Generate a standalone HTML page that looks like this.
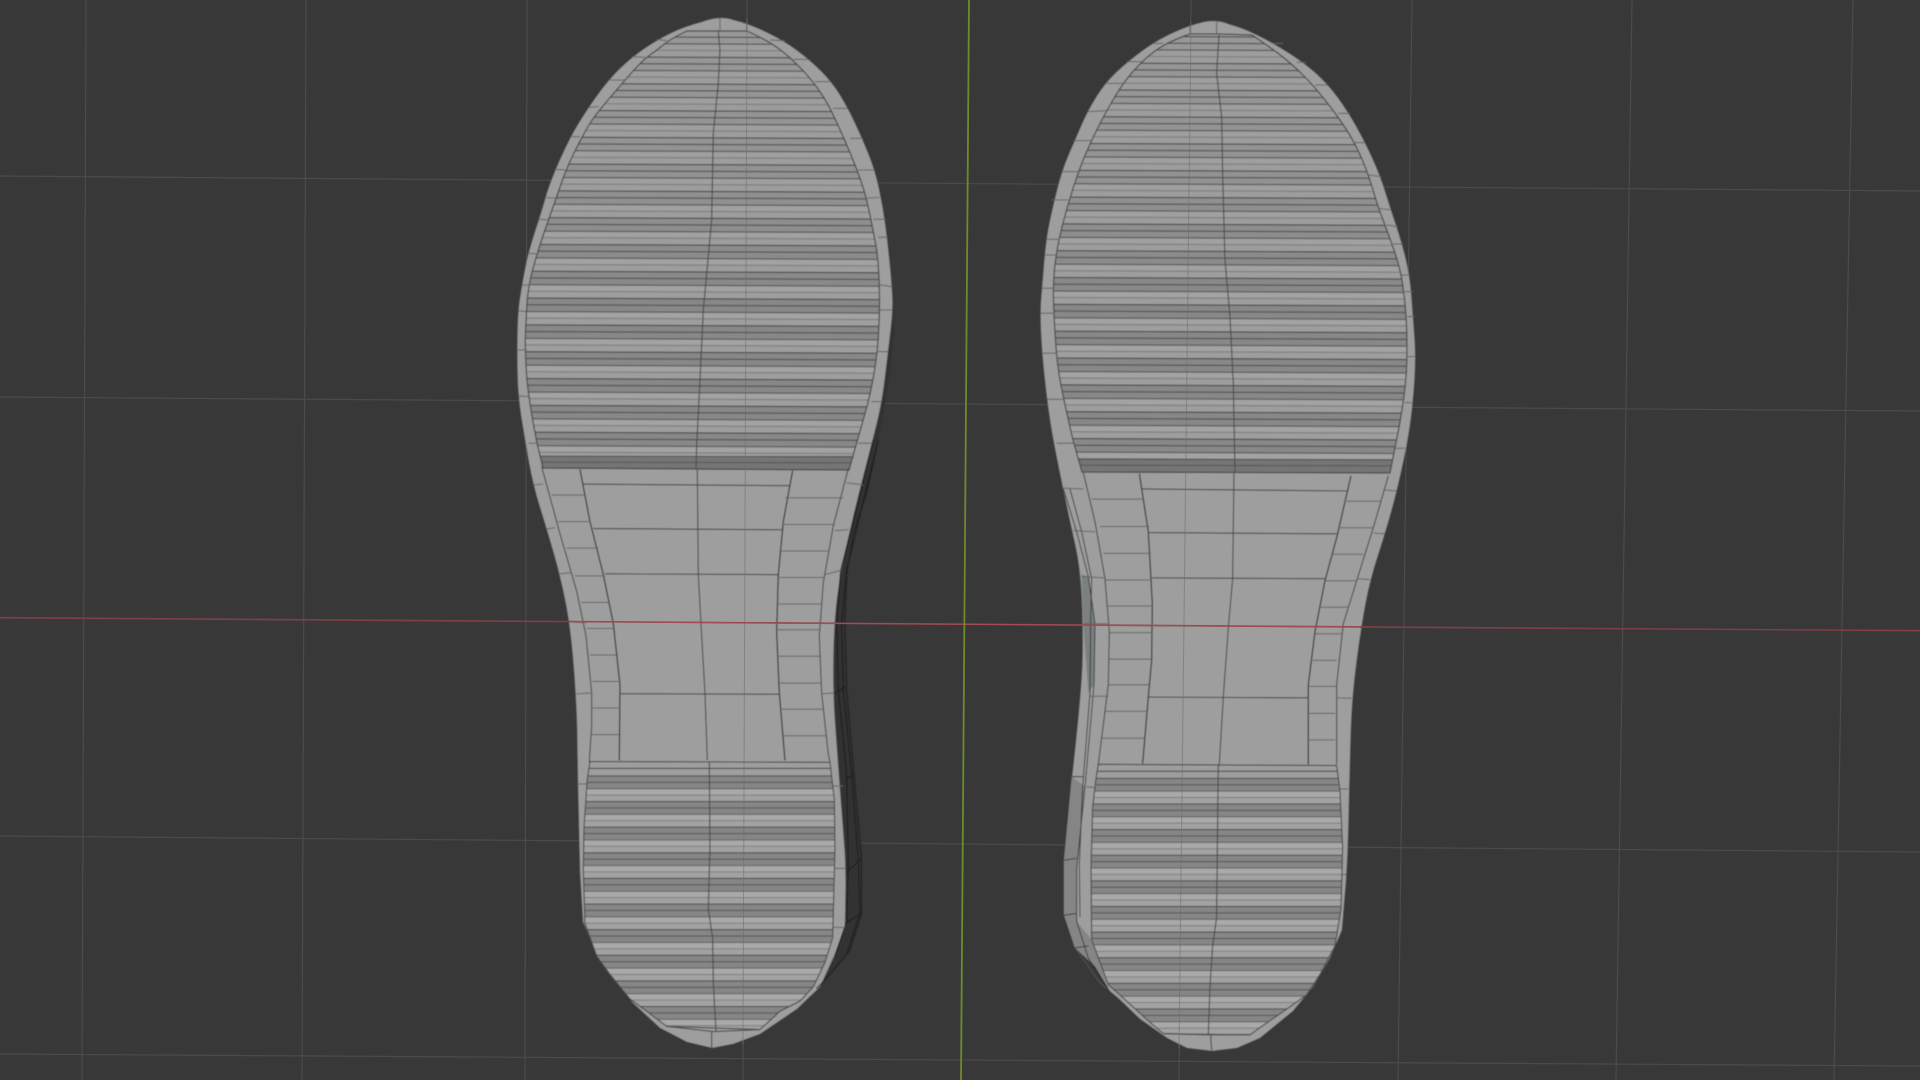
<!DOCTYPE html>
<html><head><meta charset="utf-8"><title>Viewport</title>
<style>
html,body{margin:0;padding:0;background:#383838;width:1920px;height:1080px;overflow:hidden}
svg{display:block}
path,line,polyline{vector-effect:non-scaling-stroke;fill:none}
.e{stroke:#4a4a4a;stroke-width:1.1}
.k{stroke:#3c3c3c;stroke-width:1.3}
.t{stroke:#636363;stroke-width:1}
.d{stroke:#1d1d1d;stroke-width:1}
</style></head><body>
<svg width="1920" height="1080" viewBox="0 0 1920 1080" xmlns="http://www.w3.org/2000/svg">
<defs>
<filter id="b" x="-5%" y="-5%" width="110%" height="110%"><feGaussianBlur stdDeviation="0.45"/></filter>
<path id="iL" d="M717,31 L747,31 Q767,40 778.5,48.5 Q790,57 801,68.5 Q812,80 819.5,91 Q827,102 832.5,113.5 Q838,125 844,138.5 Q850,152 856,167.5 Q862,183 865,194 Q868,205 871,220 Q874,235 876,246 Q878,257 879,278.5 Q880,300 879,325 Q878,350 874,373.5 Q870,397 864,417 L849,470 L543,468 L537,443 Q528,397 526.5,373.5 Q525,350 525.5,335 Q526,320 527,303.5 Q528,287 533,268.5 Q538,250 545.5,228.5 Q553,207 556.5,197 Q560,187 564,176 Q568,165 575,151 Q582,137 587.5,127.5 Q593,118 600.5,109 Q608,100 616.5,90 Q625,80 634,70 Q643,60 650,55 Q657,50 664.5,44 Q672,38 687,31 Z"/>
<path id="iR" d="M1220,34 L1252,35 Q1270,47 1281.5,56 Q1293,65 1303,75 Q1313,85 1325,100 Q1337,115 1346,129 Q1355,143 1361.5,158 Q1368,173 1373,190 Q1378,207 1383,220 Q1388,233 1394,250 Q1400,267 1402.5,283.5 Q1405,300 1406,316.5 Q1407,333 1407,348 Q1407,363 1406,376.5 Q1405,390 1402.5,406.5 Q1400,423 1397.5,435 L1390,473 L1082,472 L1073,440 Q1063,397 1060,380 Q1057,363 1055.5,340 Q1054,317 1053.5,300 Q1053,283 1055,265 Q1057,247 1062,227 Q1067,207 1073.5,187 Q1080,167 1086.5,152 Q1093,137 1100,123.5 Q1107,110 1115,96.5 Q1123,83 1133,71.5 Q1143,60 1155,51 Q1167,42 1190,34 Z"/>
<clipPath id="cL"><use href="#iL"/></clipPath>
<clipPath id="cR"><use href="#iR"/></clipPath>
<pattern id="fL" patternUnits="userSpaceOnUse" width="600" height="26.83" patternTransform="translate(0,429.3) rotate(0.25)">
<rect width="600" height="26.83" fill="#9e9e9e"/><rect width="600" height="13.4" fill="#888888"/><rect y="13.4" width="600" height="6.7" fill="#a3a3a3"/>
</pattern>
<pattern id="fR" patternUnits="userSpaceOnUse" width="600" height="26.83" patternTransform="translate(0,433.3) rotate(0.25)">
<rect width="600" height="26.83" fill="#9e9e9e"/><rect width="600" height="13.4" fill="#888888"/><rect y="13.4" width="600" height="6.7" fill="#a3a3a3"/>
</pattern>
<pattern id="lL" patternUnits="userSpaceOnUse" width="600" height="26.83" patternTransform="translate(0,429.3) rotate(0.25)">
<rect width="600" height="1.2" fill="#4d4d4d"/><rect y="6.7" width="600" height="1.2" fill="#525252"/><rect y="13.4" width="600" height="1.2" fill="#555"/><rect y="20.1" width="600" height="1" fill="#787878"/>
</pattern>
<pattern id="lR" patternUnits="userSpaceOnUse" width="600" height="26.83" patternTransform="translate(0,433.3) rotate(0.25)">
<rect width="600" height="1.2" fill="#4d4d4d"/><rect y="6.7" width="600" height="1.2" fill="#525252"/><rect y="13.4" width="600" height="1.2" fill="#555"/><rect y="20.1" width="600" height="1" fill="#787878"/>
</pattern>
<pattern id="hL" patternUnits="userSpaceOnUse" width="1300" height="62.8" patternTransform="translate(0,822)">
<rect width="1300" height="62.8" fill="#a2a2a2"/><rect width="1300" height="31.4" fill="#868686"/><rect y="31.4" width="1300" height="15.7" fill="#a9a9a9"/>
<rect width="1300" height="2.7" fill="#4e4e4e"/><rect y="15.7" width="1300" height="2.7" fill="#575757"/><rect y="31.4" width="1300" height="2.5" fill="#606060"/><rect y="47.1" width="1300" height="2.2" fill="#7a7a7a"/>
</pattern>
<pattern id="hR" patternUnits="userSpaceOnUse" width="1300" height="62.8" patternTransform="translate(0,828)">
<rect width="1300" height="62.8" fill="#a2a2a2"/><rect width="1300" height="31.4" fill="#868686"/><rect y="31.4" width="1300" height="15.7" fill="#a9a9a9"/>
<rect width="1300" height="2.7" fill="#4e4e4e"/><rect y="15.7" width="1300" height="2.7" fill="#575757"/><rect y="31.4" width="1300" height="2.5" fill="#606060"/><rect y="47.1" width="1300" height="2.2" fill="#7a7a7a"/>
</pattern>
<linearGradient id="fade" gradientUnits="userSpaceOnUse" x1="0" y1="30" x2="0" y2="300">
<stop offset="0" stop-color="#9c9c9c" stop-opacity=".8"/><stop offset=".55" stop-color="#9c9c9c" stop-opacity=".5"/><stop offset="1" stop-color="#9c9c9c" stop-opacity="0"/>
</linearGradient>
</defs>

<rect width="1920" height="1080" fill="#383838"/>
<!-- grid -->
<g stroke="#4b4b4b" stroke-width="1.2">
<line x1="86" y1="0" x2="82" y2="1080"/><line x1="306" y1="0" x2="302" y2="1080"/><line x1="527" y1="0" x2="525" y2="1080"/><line x1="747" y1="0" x2="743" y2="1080"/>
<line x1="1191" y1="0" x2="1179" y2="1080"/><line x1="1412" y1="0" x2="1398" y2="1080"/><line x1="1632" y1="0" x2="1616" y2="1080"/><line x1="1853" y1="0" x2="1834" y2="1080"/>
<line x1="0" y1="176" x2="1920" y2="191"/><line x1="0" y1="397" x2="1920" y2="411"/><line x1="0" y1="836" x2="1920" y2="852"/><line x1="0" y1="1054" x2="1920" y2="1066"/>
</g>

<g filter="url(#b)">
<!-- LEFT SHOE -->
<polygon fill="#323031" points="892,300 894,330 890,370 884,410 878,440 867,493 853,534 847,575 845,624 847,689 853,766 862,860 862,913 850,950 833,971 817,989 800,960 820,600 870,300"/>
<path style="fill:#9e9e9e" stroke="#666" stroke-width=".6" d="M733.5,20 Q747,23 765,31.5 Q783,40 796.5,50 Q810,60 821,71 Q832,82 840,95 Q848,108 855,123 Q862,138 868.5,154 Q875,170 879,188.5 Q883,207 885.5,226 Q888,245 890,266 Q892,287 892.5,298 Q893,310 890.5,331 Q888,352 885,377 Q882,402 877,422.5 Q872,443 867,462 Q862,481 856,505.5 Q850,530 845,552.5 Q840,575 837,599.5 Q834,624 833.5,658 Q833,693 835,721 Q837,750 840,789 Q843,828 844.5,848 Q846,868 845.5,897 L845,926 L835,954 L820,987 L797,1009 L760,1034 L733,1044 L712,1048 L687,1042 L660,1028 L633,1003 L610,975 L597,954 L583,922 L580,873 L578,787 L577,726 Q576,693 573,658.5 Q570,624 565,599.5 Q560,575 553.5,552.5 Q547,530 540,507.5 Q533,485 529,462.5 Q525,440 521.5,418.5 Q518,397 517.5,373.5 Q517,350 517.5,330 Q518,310 520,297.5 Q522,285 525,269 Q528,253 535,231.5 Q542,210 546,196 Q550,182 560,159.5 Q570,137 580,121 Q590,105 600,91.5 Q610,78 621,67.5 Q632,57 644.5,48.5 Q657,40 670,33.5 Q683,27 701.5,22 Q720,15 733.5,20 Z"/>
<g transform="matrix(.3333,0,0,.408,500,440)">
<path class="d" d="M1135 0L1075 200L1040 320L1025 450L1030 610L1055 820L1075 1030L1080 1160L1040 1260L1000 1300M1120 0L1060 200L1022 320L1010 450L1015 610L1040 820L1045 1040L1040 1180L1005 1265M1005 620L1040 605M1035 830L1060 822M1040 1060L1085 1025M1035 1185L1085 1160"/>
<path d="M1135 0L1100 130L1060 230L1040 330L1035 450L1040 610L1060 800L1085 1030L1085 1160L1050 1250L1000 1300L950 1345" stroke="#202020" stroke-width="1"/>
</g>
<!-- forefoot -->
<g clip-path="url(#cL)">
<rect x="500" y="20" width="420" height="460" fill="url(#fL)"/>
<rect x="500" y="20" width="420" height="280" fill="url(#fade)"/>
<rect x="500" y="20" width="420" height="460" fill="url(#lL)"/>
<rect x="500" y="456" width="420" height="14" fill="#757575"/>
<line x1="500" y1="456" x2="920" y2="457" stroke="#505050"/>
<line x1="500" y1="462" x2="920" y2="463" stroke="#555"/>
</g>
<use href="#iL" fill="none" stroke="#484848" stroke-width="1.2"/>
<g transform="matrix(.3333,0,0,.3333,500,0)">
<path class="e" d="M655 95L660 150L655 250L640 400L635 660L610 930L600 1140L590 1340L588 1405"/>
<path class="t" d="M80 1050L50 1050M78 935L55 932M88 855L65 855M115 762L85 760M150 660L115 658M175 595L140 593M200 510L165 508M240 410L210 410M295 320L265 322M375 240L325 240M435 172L395 170M500 122L470 118M660 52L660 92M740 65L740 92M810 120L855 122M880 178L925 178M945 245L990 245M1000 325L1045 325M1050 415L1090 415M1075 510L1125 510M1100 595L1140 592M1120 658L1158 658M1135 712L1165 712M1140 855L1178 860M1140 930L1178 930M1130 1055L1165 1055M1115 1205L1145 1205M1075 1330L1115 1330M110 1330L85 1330M85 1190L55 1188"/>
</g>
<!-- midfoot + heel -->
<g transform="matrix(.3333,0,0,.408,500,440)">
<path class="e" d="M125 65L180 230L230 370L258 480L275 620L275 700L268 790M1045 70L1000 210L970 350L958 480L965 620L985 770L990 790"/>
<path class="k" d="M240 72L270 200L310 330L340 450L360 600L358 785M878 75L850 200L835 330L830 470L838 620L855 785"/>
<path class="e" d="M592 72L595 330L603 450L615 620L622 785"/>
<path class="e" d="M248 108L870 112M280 217L850 220M315 328L835 330M362 622L838 623"/>
<path class="t" d="M155 135L255 135M175 200L270 200M200 265L295 265M225 333L315 333M245 398L330 398M260 462L340 462M270 527L355 527M277 592L360 592M278 657L360 657M275 722L358 722M855 142L1030 142M848 207L1005 207M838 272L985 272M832 337L970 337M830 402L965 402M830 465L960 465M833 530L960 530M838 596L965 596M845 660L970 660M850 725L980 725M130 108L100 110M165 215L140 218M215 325L180 328M258 448L205 445M275 620L230 622M265 843L235 843M1090 110L1040 105M1045 220L1005 222M1020 320L975 330M1002 620L965 622M1000 848L1030 848M1000 1050L1035 1050M1000 1195L1035 1195"/>
<polygon fill="url(#hL)" points="270,788 990,790 1003,880 1005,1000 1002,1100 998,1220 975,1280 940,1340 900,1375 840,1400 780,1445 500,1437 440,1400 390,1370 330,1310 290,1265 255,1185 250,1050 252,950 262,830"/>
<polygon fill="#9e9e9e" points="270,788 990,790 993,821 262,821"/>
<path class="e" d="M266 805L992 805"/>
<path class="e" d="M270 788L990 790L1003 880L1005 1000L1002 1100L998 1220L975 1280L940 1340L900 1375L840 1400L780 1445L500 1437L440 1400L390 1370L330 1310L290 1265L255 1185L250 1050L252 950L262 830Z"/>
<path class="e" d="M628 788L630 1000L625 1150L638 1220L640 1330L648 1450M635 1450L635 1490M500 1437L640 1450L780 1445"/>
</g>

<!-- RIGHT SHOE -->
<path style="fill:#9e9e9e" stroke="#666" stroke-width=".6" d="M1230,24.5 Q1243,28 1258,35.5 Q1273,43 1288,52.5 Q1303,62 1315,72.5 Q1327,83 1337,96.5 Q1347,110 1356,126 Q1365,142 1372.5,158.5 Q1380,175 1385,191 Q1390,207 1396,225 Q1402,243 1406,260 Q1410,277 1411.5,297 Q1413,317 1414.5,337 Q1416,357 1414.5,380 Q1413,403 1410.5,421.5 Q1408,440 1402.5,465.5 Q1397,491 1391,512.5 Q1385,534 1377.5,557 Q1370,580 1365.5,604 Q1361,628 1356.5,662.5 Q1352,697 1351,727.5 Q1350,758 1349,803 Q1348,848 1347,864.5 L1346,881 L1342,930 L1330,958 L1313,987 L1293,1011 L1260,1038 L1237,1048 L1212,1051 L1187,1048 L1167,1038 L1140,1019 L1117,997 L1100,983 L1075,948 L1064,915 L1064,860 L1072,777 Q1082,689 1082.5,656.5 Q1083,624 1081.5,595 Q1080,566 1075,544 Q1070,522 1061.5,481 Q1053,440 1050,420 Q1047,400 1044.5,376.5 Q1042,353 1041,333 Q1040,313 1041,300 Q1042,287 1044,263.5 Q1046,240 1049,225 Q1052,210 1057,190 Q1062,170 1068.5,155 Q1075,140 1081.5,125 Q1088,110 1096.5,96.5 Q1105,83 1116,72.5 Q1127,62 1142,51 Q1157,40 1173.5,32.5 Q1190,25 1203.5,22 Q1217,19 1230,24.5 Z"/>
<g transform="matrix(.3333,0,0,.408,1020,440)">
<polygon fill="#7c8080" points="185,330 205,335 225,450 222,600 205,620 190,450"/>
<polygon fill="#858585" points="155,825 132,1030 132,1165 165,1245 240,1330 268,1350 215,1225 170,1180 170,1050 195,850"/>
<polygon fill="#3a3a3a" points="165,1245 240,1330 268,1350 225,1290"/>
<path class="d" stroke-opacity=".7" d="M130 120L170 225L205 335L225 450L222 600L195 850L170 1050L170 1180L205 1270L268 1350M150 120L185 225L215 340L212 450L210 620L188 850L178 1040L180 1170M132 1030L170 1025M132 1165L170 1160M155 825L190 825M165 1245L205 1240"/>
</g>
<g clip-path="url(#cR)">
<rect x="1030" y="20" width="420" height="460" fill="url(#fR)"/>
<rect x="1030" y="20" width="420" height="280" fill="url(#fade)"/>
<rect x="1030" y="20" width="420" height="460" fill="url(#lR)"/>
<rect x="1030" y="459" width="420" height="14" fill="#757575"/>
<line x1="1030" y1="459" x2="1450" y2="460" stroke="#505050"/>
<line x1="1030" y1="465" x2="1450" y2="466" stroke="#555"/>
</g>
<use href="#iR" fill="none" stroke="#484848" stroke-width="1.2"/>
<g transform="matrix(.3333,0,0,.3333,1020,0)">
<path class="e" d="M597 105L590 220L605 350L608 520L615 780L630 950L640 1150L645 1415"/>
<path class="t" d="M590 63L590 103M510 75L510 103M430 130L400 130M370 185L320 185M310 250L260 250M260 332L205 335M215 422L160 422M175 515L125 515M145 600L95 600M120 718L78 718M110 765L75 765M100 865L65 865M103 940L60 940M108 1060L65 1060M130 1198L80 1198M160 1330L110 1330M760 130L790 130M830 187L860 187M885 255L925 255M955 340L990 340M1003 428L1035 428M1045 525L1085 530M1075 625L1115 630M1100 675L1135 680M1120 732L1148 732M1140 825L1170 825M1155 875L1178 875M1162 950L1185 950M1160 1070L1188 1070M1155 1208L1180 1208M1125 1345L1155 1345"/>
</g>
<g transform="matrix(.3333,0,0,.408,1020,440)">
<path class="e" d="M190 80L225 200L255 340L268 470L265 600L245 730L235 795M1105 88L1060 215L1010 345L970 450L950 600L950 795"/>
<path class="k" d="M358 82L385 225L397 400L395 540L385 630L368 793M993 88L950 240L915 345L885 470L865 600L865 795"/>
<path class="e" d="M642 80L638 340L625 460L610 630L598 795"/>
<path class="e" d="M365 120L985 125M385 227L950 230M395 338L918 340M385 630L865 632"/>
<path class="t" d="M215 145L370 145M240 212L388 212M250 278L393 278M255 343L395 343M265 407L397 407M268 472L397 472M268 537L393 537M265 600L388 600M255 665L383 665M245 731L372 731M980 150L1085 150M955 215L1060 215M935 280L1030 280M915 345L1008 345M900 410L985 410M885 475L965 475M878 540L950 540M868 604L948 604M865 670L945 670M865 735L945 735M1090 122L1130 125M1060 228L1095 230M1010 340L1050 342M950 632L995 633M960 855L985 855M968 1065L980 1065M130 118L190 120M160 222L225 225M185 335L255 338M190 450L268 450M210 628L265 628M200 850L225 852"/>
<polygon fill="url(#hR)" points="235,795 950,798 960,860 968,1000 963,1150 945,1240 900,1310 860,1360 800,1395 720,1440 690,1458 430,1455 380,1420 320,1375 265,1335 215,1225 213,1050 218,900 228,830"/>
<polygon fill="#9e9e9e" points="235,795 950,798 955,827 230,827"/>
<path class="e" d="M232 812L952 812"/>
<path class="e" d="M235 795L950 798L960 860L968 1000L963 1150L945 1240L900 1310L860 1360L800 1395L720 1440L690 1458L430 1455L380 1420L320 1375L265 1335L215 1225L213 1050L218 900L228 830Z"/>
<path class="e" d="M595 795L592 1000L590 1170L578 1240L570 1340L565 1458M572 1458L575 1497M430 1455L565 1458L690 1458"/>
</g>
</g>

<!-- x-ray grid over shoes -->
<g stroke="#6e6e6e" stroke-width="1" stroke-opacity=".55">
<line x1="747" y1="18" x2="743" y2="1045"/><line x1="1191" y1="22" x2="1179" y2="1048"/>
</g>
<!-- axes -->
<line x1="0" y1="617.7" x2="1920" y2="630.7" stroke="#7f3f46" stroke-width="1.6"/>
<line x1="570" y1="621.6" x2="1360" y2="627" stroke="#b0525a" stroke-width="1.2" stroke-opacity=".75"/>
<line x1="969" y1="0" x2="961" y2="1080" stroke="#6d8a2c" stroke-width="1.8"/>
</svg>
</body></html>
